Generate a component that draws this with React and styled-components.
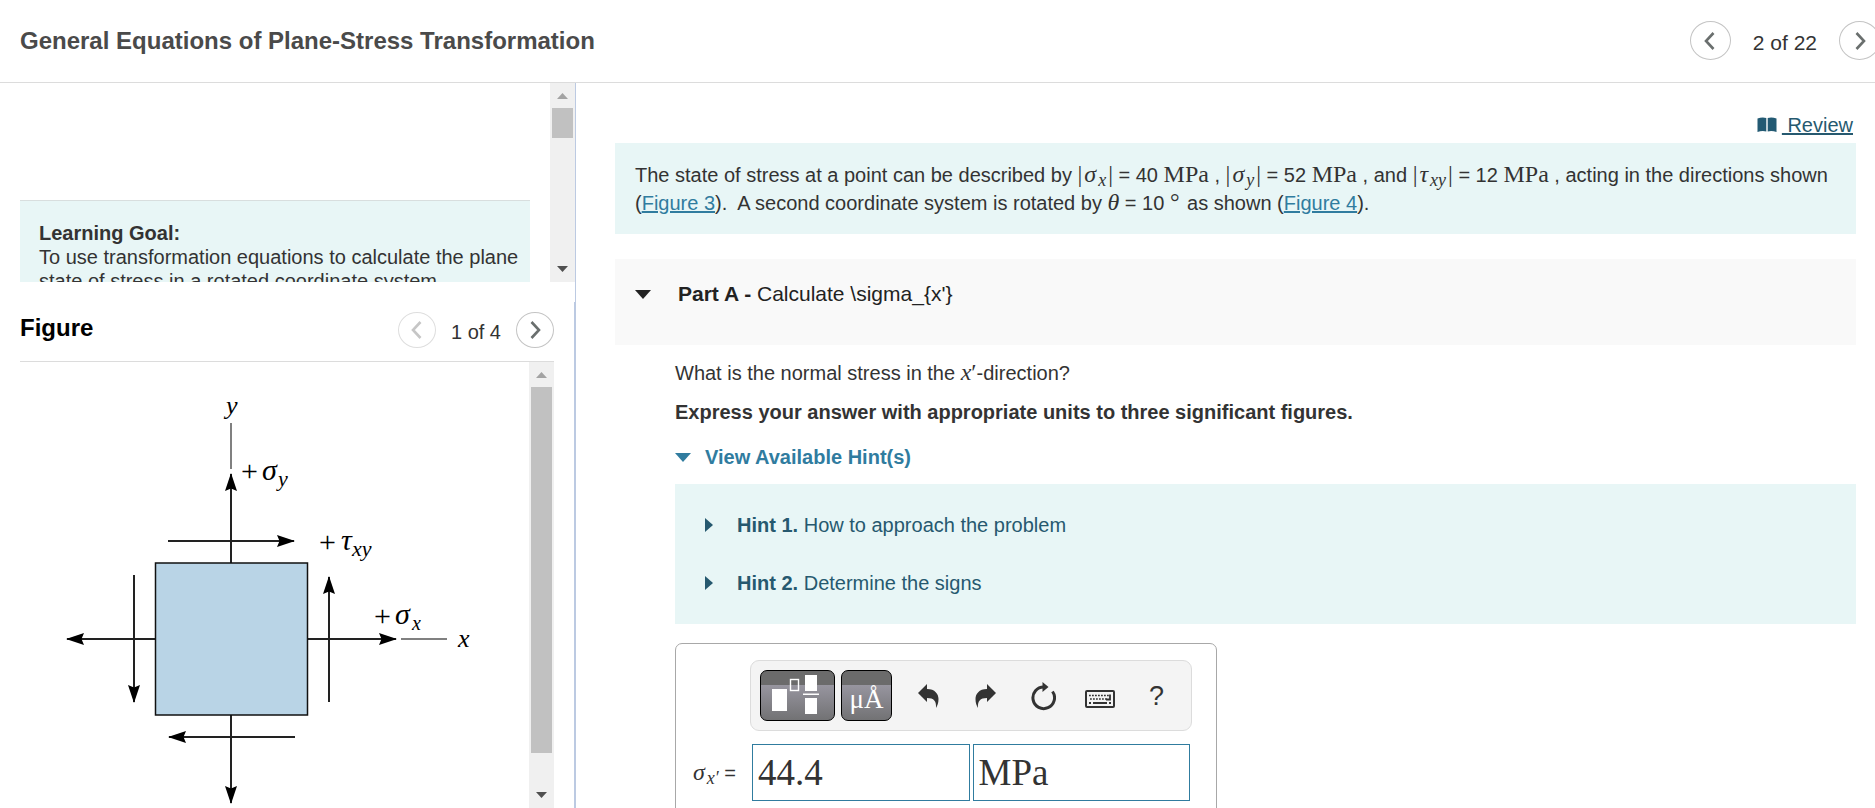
import styled, { createGlobalStyle } from 'styled-components';

const INK = '#333';
const TEAL = '#e8f6f6';

const GlobalStyle = createGlobalStyle`
  * {
    box-sizing: border-box;
  }

  body {
    margin: 0;
    background-color: #fff;
    font-family: 'Liberation Sans', Arial, sans-serif;
    font-size: 20px;
    color: ${INK};
  }

  h1, h2, p {
    margin: 0;
  }

  button {
    padding: 0;
    border: none;
    background: none;
    font: inherit;
    color: inherit;
  }
`;

const Page = styled.div`
  display: flex;
  height: 100vh;
  flex-direction: column;
  overflow: hidden;
`;

const Header = styled.header`
  display: flex;
  flex: none;
  height: 83px;
  padding: 0 0 1px 20px;
  align-items: center;
  justify-content: space-between;
  border-bottom: 1px solid #dcdcdc;
  overflow: hidden;
`;

const Title = styled.h1`
  font-size: 24px;
  line-height: 28px;
  color: #4a4a4a;
`;

const Pager = styled.nav`
  display: flex;
  align-items: center;
  gap: ${({ $large }) => ($large ? '22px' : '15px')};
  margin-right: ${({ $large }) => ($large ? '-5px' : '0')};
`;

const PageCount = styled.span`
  padding-top: 5px;
  font-size: ${({ $large }) => ($large ? '21px' : '20px')};
  line-height: 24px;
`;

const RoundButton = styled.button`
  display: flex;
  width: ${({ $size }) => $size}px;
  height: ${({ $size }) => $size - 2}px;
  align-items: center;
  justify-content: center;
  border: 1px solid #c4c4c4;
  border-radius: 50%;
  color: #6a6f6e;

  &:disabled {
    border-color: #dedede;
    color: #c6c6c6;
  }
`;

const Body = styled.div`
  display: flex;
  flex: 1;
  min-height: 0;
`;

const Sidebar = styled.aside`
  display: flex;
  flex: none;
  width: 576px;
  flex-direction: column;
`;

const GoalPane = styled.section`
  display: flex;
  flex: none;
  height: 219px;
  padding-bottom: 20px;
  border-right: 1px solid #bccae2;
`;

const GoalScroll = styled.div`
  flex: 1;
  padding: 117px 20px 0;
  overflow: hidden;
`;

const GoalBox = styled.div`
  padding: 20px 10px 20px 19px;
  border-top: 1px solid #d8dede;
  background-color: ${TEAL};
  line-height: 24px;
`;

const FigurePane = styled.section`
  display: flex;
  flex: 1;
  min-height: 0;
  padding: 0 20px;
  flex-direction: column;
  border-right: 2px solid #bccae2;
`;

const FigureHeader = styled.div`
  display: flex;
  flex: none;
  height: 60px;
  padding-bottom: 4px;
  align-items: center;
  justify-content: space-between;
  border-bottom: 1px solid #dcdcdc;
`;

const FigureTitle = styled.h2`
  padding-bottom: 4px;
  font-size: 24px;
  line-height: 28px;
  color: #000;
`;

const FigureBody = styled.div`
  display: flex;
  flex: 1;
  min-height: 0;
`;

const FigureCanvas = styled.div`
  flex: 1;
  overflow: hidden;

  svg {
    display: block;
  }
`;

const Track = styled.div`
  display: flex;
  flex: none;
  width: 25px;
  padding: 0 2px;
  flex-direction: column;
  align-items: center;
  background-color: #f0f0f0;
`;

const TrackArrow = styled.svg`
  flex: none;
  width: 25px;
  height: 25px;
`;

const Thumb = styled.div`
  width: 100%;
  flex: 0 0 ${({ $share }) => $share}%;
  margin-bottom: auto;
  background-color: #c1c1c1;
`;

const Main = styled.main`
  display: flex;
  flex: 1;
  min-width: 0;
  padding: 28px 19px 0 39px;
  flex-direction: column;
`;

const ReviewLink = styled.a`
  display: flex;
  align-self: flex-end;
  align-items: center;
  gap: 5px;
  padding-right: 3px;
  margin-bottom: 4px;
  line-height: 28px;
  color: #26596f;
  text-decoration: none;

  span {
    text-decoration: underline;
    white-space: pre;
  }
`;

const Statement = styled.p`
  padding: 18px 20px 17px;
  margin-bottom: 25px;
  background-color: ${TEAL};
  line-height: 28px;
`;

const FigureLink = styled.a`
  color: #307c9f;
`;

const MathText = styled.span`
  font-family: 'Liberation Serif', 'Times New Roman', serif;
  font-size: 24px;
  line-height: 1;

  sub {
    padding-left: 2px;
    font-size: 18px;
    line-height: 1;
    vertical-align: -4px;
  }
`;

const Bars = styled(MathText)`
  i {
    padding: 0 2px;
  }
`;

const Degree = styled(MathText)`
  margin: 0 2px 0 0;
`;

const PartHeader = styled.button`
  display: flex;
  flex: none;
  height: 86px;
  padding: 21px 20px 0;
  align-items: flex-start;
  gap: 27px;
  background-color: #f9f9f9;
  font-size: 21px;
  line-height: 28px;
  text-align: left;
  color: #222;

  svg {
    margin-top: 10px;
  }
`;

const PartBody = styled.div`
  display: flex;
  padding: 14px 0 0 60px;
  flex-direction: column;
  line-height: 28px;
`;

const Instruction = styled.p`
  margin-top: 11px;
  font-weight: 700;
`;

const HintToggle = styled.button`
  display: flex;
  align-items: center;
  gap: 14px;
  margin: 17px 0 13px;
  font-weight: 700;
  color: #307c9f;
`;

const HintList = styled.div`
  display: flex;
  flex: none;
  height: 140px;
  padding: 27px 29px;
  flex-direction: column;
  gap: 30px;
  background-color: ${TEAL};
`;

const Hint = styled.button`
  display: flex;
  align-items: center;
  gap: 24px;
  line-height: 28px;
  color: #26596f;
`;

const AnswerBox = styled.form`
  flex: none;
  width: 542px;
  padding: 16px 24px 40px 17px;
  margin-top: 19px;
  border: 1px solid #a8a8a8;
  border-radius: 7px;
`;

const Toolbar = styled.div`
  display: flex;
  height: 71px;
  margin-left: 57px;
  padding-left: 9px;
  align-items: center;
  gap: 6px;
  border: 1px solid #dcdcdc;
  border-radius: 9px;
  background-color: #f4f4f4;
`;

const DarkButton = styled.button`
  display: flex;
  width: ${({ $width }) => $width}px;
  height: 51px;
  align-items: center;
  justify-content: center;
  border: 1px solid #000;
  border-radius: 7px;
  background: linear-gradient(#6b6b6b 0 29%, #97959f 29%, #727274 100%);
  color: #fff;
`;

const UnitSymbols = styled.span`
  padding-top: 6px;
  font-family: 'Liberation Serif', serif;
  font-size: 27px;
  line-height: 28px;
`;

const ToolButtons = styled.div`
  display: flex;
  padding-left: 2px;
`;

const ToolButton = styled.button`
  display: flex;
  width: 57px;
  height: 51px;
  align-items: center;
  justify-content: center;
  font-size: 27px;
`;

const AnswerRow = styled.div`
  display: flex;
  margin: 13px 2px 0 0;
  align-items: center;
`;

const AnswerLabel = styled.label`
  flex: none;
  width: 59px;
`;

const AnswerInput = styled.input`
  flex: 1;
  min-width: 0;
  height: 57px;
  padding: 0 5px;
  border: 1px solid #307c9f;
  font-family: 'Liberation Serif', 'Times New Roman', serif;
  font-size: 37px;
  color: ${INK};

  & + & {
    margin-left: 3px;
  }
`;

const Chevron = ({ right }) => (
  <svg width="14" height="20" viewBox="0 0 14 20" fill="none" aria-hidden="true">
    <path
      d={right ? 'M3.5 2L11 10L3.5 18' : 'M10.5 2L3 10L10.5 18'}
      stroke="currentColor"
      strokeWidth="2.6"
    />
  </svg>
);

const CaretDown = () => (
  <svg width="16" height="9" viewBox="0 0 16 9" aria-hidden="true">
    <path d="M0 0H16L8 9Z" fill="currentColor" />
  </svg>
);

const CaretRight = () => (
  <svg width="9" height="14" viewBox="0 0 9 14" aria-hidden="true">
    <path d="M1 0L9 7L1 14Z" fill="currentColor" />
  </svg>
);

const Scrollbar = ({ share }) => (
  <Track aria-hidden="true">
    <TrackArrow viewBox="0 0 25 25">
      <path d="M7 16H18L12.5 10Z" fill="#a3a3a3" />
    </TrackArrow>
    <Thumb $share={share} />
    <TrackArrow viewBox="0 0 25 25">
      <path d="M7 9H18L12.5 15Z" fill="#505050" />
    </TrackArrow>
  </Track>
);

const BookIcon = () => (
  <svg width="20" height="16" viewBox="0 0 20 16" aria-hidden="true">
    <path
      d="M0.5 1.5Q5 0 9.3 1V14.5Q5 13.5 0.5 15ZM10.7 1Q15 0 19.5 1.5V15Q15 13.5 10.7 14.5Z"
      fill="#235a73"
    />
  </svg>
);

const TemplateIcon = () => (
  <svg width="73" height="49" viewBox="0 0 73 49" aria-hidden="true">
    <path d="M11 18H26V40H11ZM44 4H56V20H44ZM44 27H56V43H44ZM42 22.5H58V24H42Z" fill="#fff" />
    <rect x="29.5" y="8.5" width="8" height="11" fill="none" stroke="#fff" strokeWidth="1.4" />
  </svg>
);

const UndoIcon = () => (
  <svg width="22" height="24" viewBox="0 0 22 24" aria-hidden="true">
    <path
      d="M0 9L9 0V5C17 5 20.5 10 20.5 15C20.5 19 19.5 21.5 18 24C18.5 17 16 14 9 14V18Z"
      fill="currentColor"
    />
  </svg>
);

const RedoIcon = () => (
  <svg width="22" height="24" viewBox="0 0 22 24" aria-hidden="true">
    <path
      d="M21 9L12 0V5C4 5 0.5 10 0.5 15C0.5 19 1.5 21.5 3 24C2.5 17 5 14 12 14V18Z"
      fill="currentColor"
    />
  </svg>
);

const ResetIcon = () => (
  <svg width="26" height="30" viewBox="0 0 26 30" aria-hidden="true">
    <path
      d="M14 6A10.8 10.8 0 1 0 22.5 10.5"
      fill="none"
      stroke="currentColor"
      strokeWidth="3"
    />
    <path d="M12.5 1L18.5 6L12.5 11Z" fill="currentColor" />
  </svg>
);

const KeyboardIcon = () => (
  <svg width="30" height="24" viewBox="0 0 30 24" fill="none" stroke="currentColor" aria-hidden="true">
    <rect x="1" y="7" width="28" height="16" rx="1" strokeWidth="2" />
    <path d="M4 11.5H24M5 15H22" strokeWidth="1.6" strokeDasharray="1.8 1.2" />
    <path d="M4 19H6M24 19H26M8 19H22M25 10.5V15.5H21" strokeWidth="1.8" />
  </svg>
);

// Each arrow runs from (x1, y1) to its tip at (x2, y2)
const ARROWS = [
  [211, 201, 211, 112],
  [211, 352, 211, 441],
  [148, 179, 274, 179],
  [275, 375, 149, 375],
  [135, 277, 47, 277],
  [287, 277, 376, 277],
  [309, 340, 309, 215],
  [114, 213, 114, 340],
];

const StressFigure = () => (
  <svg
    width="509"
    height="446"
    viewBox="0 0 509 446"
    fontFamily="'Liberation Serif', 'Times New Roman', serif"
    fontSize="26"
    fill="#000"
    role="img"
    aria-label="Stress element"
  >
    <defs>
      <marker
        id="tip"
        viewBox="0 0 18 12"
        refX="17"
        refY="6"
        markerWidth="18"
        markerHeight="12"
        markerUnits="userSpaceOnUse"
        orient="auto"
      >
        <path d="M18 6L0 0L2.5 6L0 12Z" />
      </marker>
    </defs>
    <path d="M211 61V107M381 277H427" stroke="#808080" strokeWidth="2" />
    {ARROWS.map(([x1, y1, x2, y2]) => (
      <line
        key={`${x1}-${y1}`}
        x1={x1}
        y1={y1}
        x2={x2}
        y2={y2}
        stroke="#222"
        strokeWidth="2"
        markerEnd="url(#tip)"
      />
    ))}
    <rect x="135.5" y="201" width="152" height="152" fill="#b9d4e6" stroke="#111" strokeWidth="1.5" />
    <text x="206" y="52" fontStyle="italic">y</text>
    <text x="438" y="285" fontStyle="italic">x</text>
    <text x="221" y="119" fontSize="30">+</text>
    <text x="242" y="118" fontSize="30" fontStyle="italic">σ</text>
    <text x="258" y="124" fontSize="22" fontStyle="italic">y</text>
    <text x="299" y="190" fontSize="30">+</text>
    <text x="321" y="188" fontSize="30" fontStyle="italic">τ</text>
    <text x="332" y="194" fontSize="22" fontStyle="italic">xy</text>
    <text x="354" y="264" fontSize="30">+</text>
    <text x="375" y="262" fontSize="30" fontStyle="italic">σ</text>
    <text x="392" y="268" fontSize="20" fontStyle="italic">x</text>
  </svg>
);

const Magnitude = ({ symbol, axis }) => (
  <Bars>
    |<i>{symbol}<sub>{axis}</sub></i>|
  </Bars>
);

const Unit = () => <MathText>MPa</MathText>;

const App = () => (
  <Page>
    <GlobalStyle />
    <Header>
      <Title>General Equations of Plane-Stress Transformation</Title>
      <Pager $large aria-label="Items">
        <RoundButton $size={41} aria-label="Previous item">
          <Chevron />
        </RoundButton>
        <PageCount $large>2 of 22</PageCount>
        <RoundButton $size={41} aria-label="Next item">
          <Chevron right />
        </RoundButton>
      </Pager>
    </Header>
    <Body>
      <Sidebar>
        <GoalPane>
          <GoalScroll>
            <GoalBox>
              <strong>Learning Goal:</strong>
              <p>
                To use transformation equations to calculate the plane state of
                stress in a rotated coordinate system.
              </p>
            </GoalBox>
          </GoalScroll>
          <Scrollbar share={15} />
        </GoalPane>
        <FigurePane>
          <FigureHeader>
            <FigureTitle>Figure</FigureTitle>
            <Pager aria-label="Figures">
              <RoundButton $size={38} disabled aria-label="Previous figure">
                <Chevron />
              </RoundButton>
              <PageCount>1 of 4</PageCount>
              <RoundButton $size={38} aria-label="Next figure">
                <Chevron right />
              </RoundButton>
            </Pager>
          </FigureHeader>
          <FigureBody>
            <FigureCanvas>
              <StressFigure />
            </FigureCanvas>
            <Scrollbar share={82} />
          </FigureBody>
        </FigurePane>
      </Sidebar>
      <Main>
        <ReviewLink href="#review">
          <BookIcon />
          <span> Review</span>
        </ReviewLink>
        <Statement>
          The state of stress at a point can be described by{' '}
          <Magnitude symbol="σ" axis="x" /> = 40 <Unit /> ,{' '}
          <Magnitude symbol="σ" axis="y" /> = 52 <Unit /> , and{' '}
          <Magnitude symbol="τ" axis="xy" /> = 12 <Unit /> , acting in the
          directions shown (<FigureLink href="#figure3">Figure 3</FigureLink>).
          {'\u00a0 '}A second coordinate system is rotated by{' '}
          <MathText><i>θ</i></MathText> = 10 <Degree>°</Degree> as shown (
          <FigureLink href="#figure4">Figure 4</FigureLink>).
        </Statement>
        <PartHeader aria-expanded="true">
          <CaretDown />
          <span>
            <strong>Part A - </strong>Calculate \sigma_{'{'}x'{'}'}
          </span>
        </PartHeader>
        <PartBody>
          <p>
            What is the normal stress in the <MathText><i>x</i>′</MathText>
            -direction?
          </p>
          <Instruction>
            Express your answer with appropriate units to three significant
            figures.
          </Instruction>
          <HintToggle aria-expanded="true">
            <CaretDown />
            View Available Hint(s)
          </HintToggle>
          <HintList>
            <Hint>
              <CaretRight />
              <span><strong>Hint 1.</strong> How to approach the problem</span>
            </Hint>
            <Hint>
              <CaretRight />
              <span><strong>Hint 2.</strong> Determine the signs</span>
            </Hint>
          </HintList>
          <AnswerBox>
            <Toolbar>
              <DarkButton type="button" $width={75} aria-label="Templates">
                <TemplateIcon />
              </DarkButton>
              <DarkButton type="button" $width={51}>
                <UnitSymbols>μÅ</UnitSymbols>
              </DarkButton>
              <ToolButtons>
                <ToolButton type="button" aria-label="Undo"><UndoIcon /></ToolButton>
                <ToolButton type="button" aria-label="Redo"><RedoIcon /></ToolButton>
                <ToolButton type="button" aria-label="Reset"><ResetIcon /></ToolButton>
                <ToolButton type="button" aria-label="Keyboard"><KeyboardIcon /></ToolButton>
                <ToolButton type="button">?</ToolButton>
              </ToolButtons>
            </Toolbar>
            <AnswerRow>
              <AnswerLabel htmlFor="value">
                <MathText><i>σ<sub>x′</sub></i></MathText> =
              </AnswerLabel>
              <AnswerInput id="value" defaultValue="44.4" />
              <AnswerInput aria-label="Units" defaultValue="MPa" />
            </AnswerRow>
          </AnswerBox>
        </PartBody>
      </Main>
    </Body>
  </Page>
);

export default App;
